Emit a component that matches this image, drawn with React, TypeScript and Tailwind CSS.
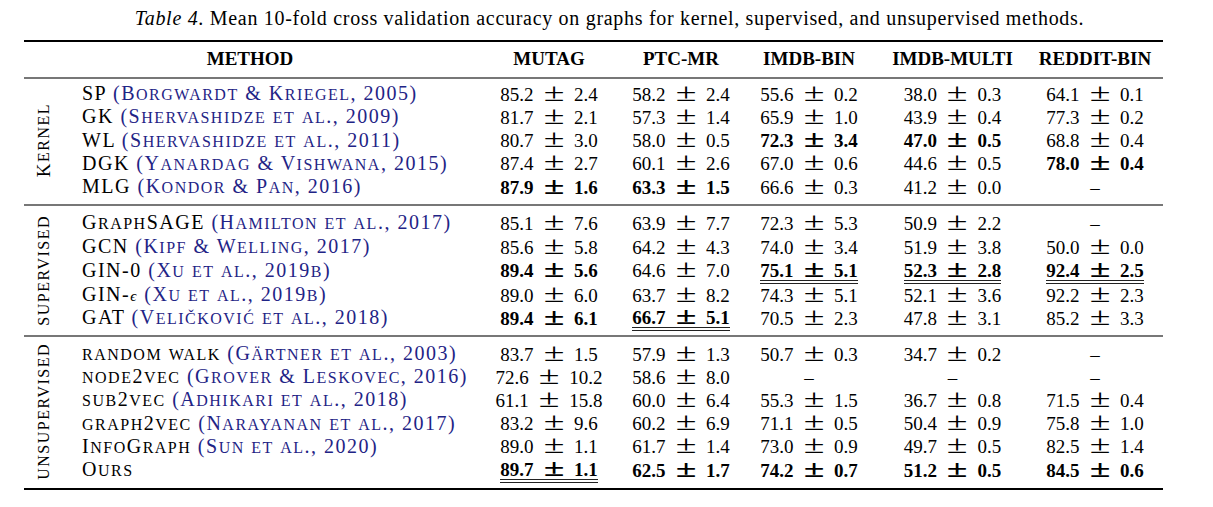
import React from "react";

type C = { v: string; b?: boolean; u?: boolean } | null;

function SC({ t }: { t: string }) {
  const parts = t.split(/(\p{Ll}+)/u);
  return (
    <>
      {parts.map((p, i) =>
        /\p{Ll}/u.test(p) ? (
          <span key={i} className="text-[16px]">
            {p.toUpperCase()}
          </span>
        ) : (
          <React.Fragment key={i}>{p}</React.Fragment>
        )
      )}
    </>
  );
}

function Cite({ t }: { t: string }) {
  return (
    <span className="text-[#1f2486]">
      (<SC t={t} />)
    </span>
  );
}

function Cell({ c }: { c: C }) {
  if (!c) return <div className="text-center">–</div>;
  const [a, b] = c.v.split("±");
  const inner = (
    <>
      {a}
      <span className="inline-block mx-[13px] text-[26px] leading-[12px] scale-x-[1.45]">±</span>
      {b}
    </>
  );
  return (
    <div className={c.b ? "text-center font-bold" : "text-center"}>
      {c.u ? (
        <span className="inline-block leading-[18px] border-b-[4px] border-double border-[#222]">{inner}</span>
      ) : (
        inner
      )}
    </div>
  );
}

type Row = { name: React.ReactNode; cite?: string; cells: C[] };

const n = (v: string): C => ({ v });
const B = (v: string): C => ({ v, b: true });
const BU = (v: string): C => ({ v, b: true, u: true });

const kernel: Row[] = [
  { name: "SP", cite: "Borgwardt & Kriegel, 2005", cells: [n("85.2±2.4"), n("58.2±2.4"), n("55.6±0.2"), n("38.0±0.3"), n("64.1±0.1")] },
  { name: "GK", cite: "Shervashidze et al., 2009", cells: [n("81.7±2.1"), n("57.3±1.4"), n("65.9±1.0"), n("43.9±0.4"), n("77.3±0.2")] },
  { name: "WL", cite: "Shervashidze et al., 2011", cells: [n("80.7±3.0"), n("58.0±0.5"), B("72.3±3.4"), B("47.0±0.5"), n("68.8±0.4")] },
  { name: "DGK", cite: "Yanardag & Vishwana, 2015", cells: [n("87.4±2.7"), n("60.1±2.6"), n("67.0±0.6"), n("44.6±0.5"), B("78.0±0.4")] },
  { name: "MLG", cite: "Kondor & Pan, 2016", cells: [B("87.9±1.6"), B("63.3±1.5"), n("66.6±0.3"), n("41.2±0.0"), null] },
];

const supervised: Row[] = [
  { name: <><SC t="Graph" />SAGE</>, cite: "Hamilton et al., 2017", cells: [n("85.1±7.6"), n("63.9±7.7"), n("72.3±5.3"), n("50.9±2.2"), null] },
  { name: "GCN", cite: "Kipf & Welling, 2017", cells: [n("85.6±5.8"), n("64.2±4.3"), n("74.0±3.4"), n("51.9±3.8"), n("50.0±0.0")] },
  { name: "GIN-0", cite: "Xu et al., 2019b", cells: [B("89.4±5.6"), n("64.6±7.0"), BU("75.1±5.1"), BU("52.3±2.8"), BU("92.4±2.5")] },
  { name: <>GIN-<span className="italic text-[15px]">ϵ</span></>, cite: "Xu et al., 2019b", cells: [n("89.0±6.0"), n("63.7±8.2"), n("74.3±5.1"), n("52.1±3.6"), n("92.2±2.3")] },
  { name: "GAT", cite: "Veličković et al., 2018", cells: [B("89.4±6.1"), BU("66.7±5.1"), n("70.5±2.3"), n("47.8±3.1"), n("85.2±3.3")] },
];

const unsupervised: Row[] = [
  { name: <SC t="random walk" />, cite: "Gärtner et al., 2003", cells: [n("83.7±1.5"), n("57.9±1.3"), n("50.7±0.3"), n("34.7±0.2"), null] },
  { name: <SC t="node2vec" />, cite: "Grover & Leskovec, 2016", cells: [n("72.6±10.2"), n("58.6±8.0"), null, null, null] },
  { name: <SC t="sub2vec" />, cite: "Adhikari et al., 2018", cells: [n("61.1±15.8"), n("60.0±6.4"), n("55.3±1.5"), n("36.7±0.8"), n("71.5±0.4")] },
  { name: <SC t="graph2vec" />, cite: "Narayanan et al., 2017", cells: [n("83.2±9.6"), n("60.2±6.9"), n("71.1±0.5"), n("50.4±0.9"), n("75.8±1.0")] },
  { name: <SC t="InfoGraph" />, cite: "Sun et al., 2020", cells: [n("89.0±1.1"), n("61.7±1.4"), n("73.0±0.9"), n("49.7±0.5"), n("82.5±1.4")] },
  { name: <SC t="Ours" />, cells: [BU("89.7±1.1"), B("62.5±1.7"), B("74.2±0.7"), B("51.2±0.5"), B("84.5±0.6")] },
];

function Section({ label, rows, rowH, pad }: { label: string; rows: Row[]; rowH: string; pad: string }) {
  return (
    <div className={`flex ${pad}`}>
      <div className="w-[40px] flex items-center justify-center">
        <div className="[writing-mode:vertical-rl] rotate-180 leading-[20px] whitespace-nowrap tracking-[1.5px]">
          <SC t={label} />
        </div>
      </div>
      <div className="flex flex-col">
        {rows.map((r, i) => (
          <div key={i} className={`grid grid-cols-[412px_146px_118px_138px_149px_136px] items-center whitespace-nowrap ${rowH}`}>
            <div className="pl-[18px] tracking-[1.5px] text-[20px]">
              {r.name}
              {r.cite ? (
                <>
                  {" "}
                  <Cite t={r.cite} />
                </>
              ) : null}
            </div>
            {r.cells.map((c, j) => (
              <Cell key={j} c={c} />
            ))}
          </div>
        ))}
      </div>
    </div>
  );
}

export default function App() {
  return (
    <div className="w-[1213px] h-[507px] bg-white text-black [font-family:'Liberation_Serif','Times_New_Roman',serif] text-[19px] overflow-hidden">
      <div className="pt-[6px] leading-[24px] text-center pl-[6px] text-[20px] tracking-[0.7px]">
        <span className="italic">Table 4</span>. Mean 10-fold cross validation accuracy on graphs for kernel, supervised, and unsupervised methods.
      </div>
      <div className="ml-[24px] w-[1139px] mt-[10px]">
        <div className="h-[2px] bg-black" />
        <div className="h-[35px] grid grid-cols-[452px_146px_118px_138px_149px_136px] items-center font-bold text-center whitespace-nowrap">
          <div>METHOD</div>
          <div>MUTAG</div>
          <div>PTC-MR</div>
          <div>IMDB-BIN</div>
          <div>IMDB-MULTI</div>
          <div>REDDIT-BIN</div>
        </div>
        <div className="h-[2px] bg-[#777]" />
        <Section label="Kernel" rows={kernel} rowH="h-[23.25px] leading-[23.25px]" pad="pt-[3px] pb-[6px]" />
        <div className="h-[2px] bg-[#777]" />
        <Section label="supervised" rows={supervised} rowH="h-[23.75px] leading-[23.75px]" pad="pt-[5px] pb-[5px]" />
        <div className="h-[2px] bg-[#777]" />
        <Section label="unsupervised" rows={unsupervised} rowH="h-[23.2px] leading-[23.2px]" pad="pt-[5px] pb-[7px]" />
        <div className="h-[2px] bg-black" />
      </div>
    </div>
  );
}
